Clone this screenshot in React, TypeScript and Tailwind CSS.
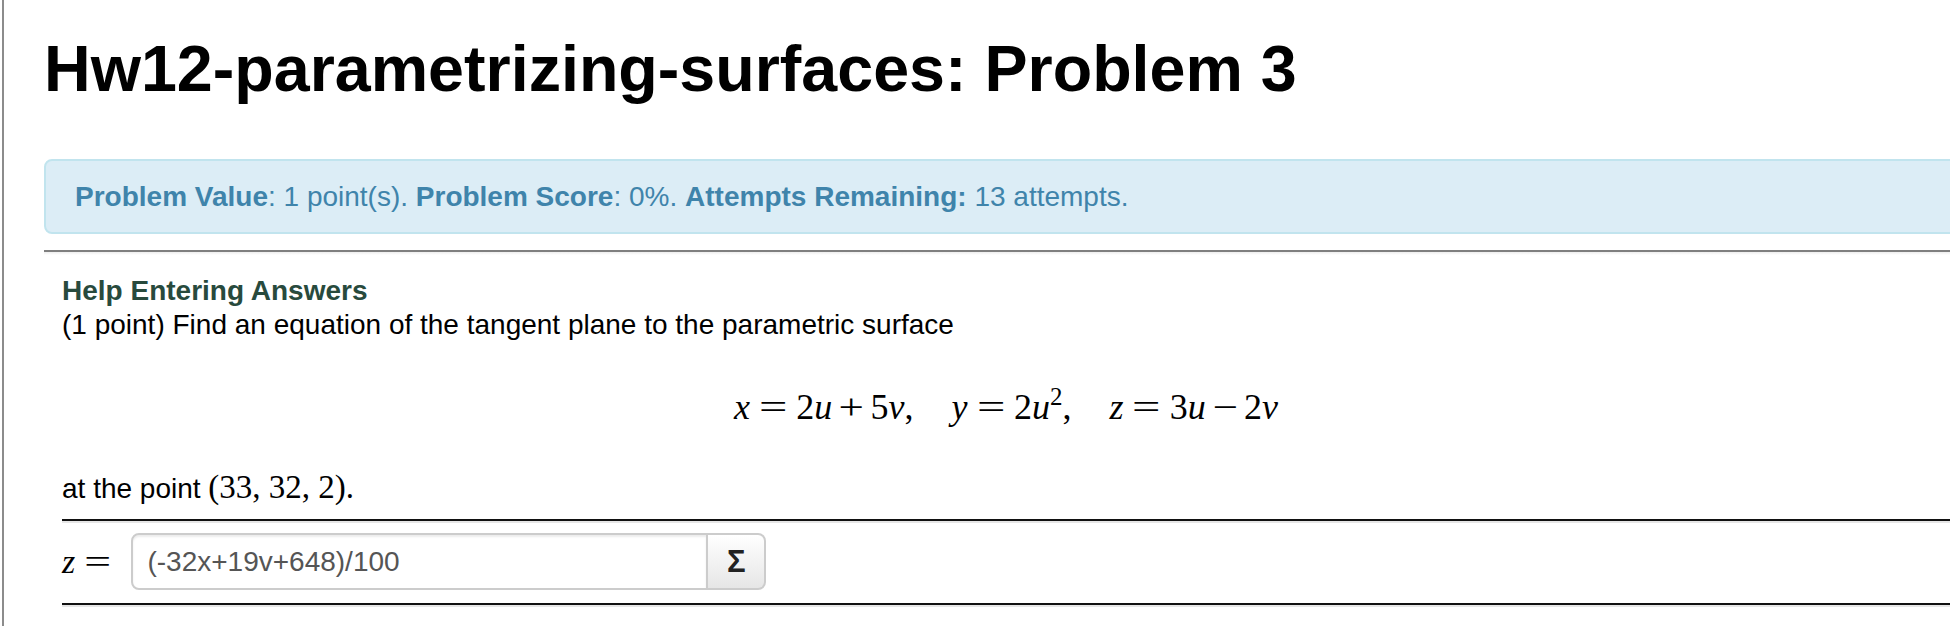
export default function App() {
  const serif = "font-['Liberation_Serif','Times_New_Roman',serif]";
  const eq = "mx-[13px] inline-block scale-x-[1.4]";
  return (
    <div className="w-[1950px] h-[626px] overflow-hidden bg-white font-['Liberation_Sans',Arial,sans-serif] text-black">
      <div className="ml-[2px] h-full border-l-2 border-[#8c8c8c] pl-[40px]">
        <h1 className="pt-[30px] text-[64.6px] font-bold leading-[78px]">
          Hw12-parametrizing-surfaces: Problem 3
        </h1>
        <div className="mt-[51px] -mr-6 rounded-l-[8px] border-2 border-[#c1e4ee] bg-[#dcedf6] pt-[16px] pb-[15px] pl-[29px] text-[28px] leading-[40px] text-[#3f84ab]">
          <b>Problem Value</b>: 1 point(s). <b>Problem Score</b>: 0%. <b>Attempts Remaining:</b> 13 attempts.
        </div>
        <div className="mt-[16px] border-t-2 border-[#7f7f7f]">
          <div className="h-[3px] bg-linear-to-b from-[#eeeeee] to-white" />
          <div className="pl-[18px] pt-[19px] text-[28px] leading-[34px]">
            <div className="font-bold text-[#284a3d]">Help Entering Answers</div>
            <div>(1 point) Find an equation of the tangent plane to the parametric surface</div>
            <div className={`mt-[45px] text-center text-[36px] leading-[40px] ${serif}`}>
              <i>x</i>
              <span className={eq}>=</span>2<i>u</i>
              <span className="mx-[9px] inline-block scale-x-[1.25]">+</span>5<i>v</i>,
              <span className="inline-block w-[38px]" />
              <i>y</i>
              <span className={eq}>=</span>2<i>u</i>
              <sup className="relative top-[-3px] text-[25px] align-top leading-none">2</sup>,
              <span className="inline-block w-[38px]" />
              <i>z</i>
              <span className={eq}>=</span>3<i>u</i>
              <span className="mx-[9px] inline-block scale-x-[1.25]">−</span>2<i>v</i>
            </div>
            <div className="mt-[42px] leading-[40px]">
              at the point <span className={`text-[33px] leading-none ${serif}`}>(33, 32, 2).</span>
            </div>
            <div className="mt-[10px] border-t-2 border-[#111111]">
              <div className="h-[2px] bg-[#e6e6e6]" />
            </div>
            <div className="mt-[10px] flex h-[57px] items-center">
              <span className={`text-[34px] italic leading-none ${serif}`}>z</span>
              <span className={`ml-[13px] inline-block scale-x-[1.4] text-[34px] leading-none ${serif}`}>=</span>
              <div className="ml-[24px] flex h-full w-[577px] items-center rounded-l-[8px] border-2 border-[#cccccc] pl-[14px] text-[#555555] shadow-[inset_0_2px_2px_rgba(0,0,0,0.075)]">
                (-32x+19v+648)/100
              </div>
              <div className="flex h-full w-[58px] items-center justify-center rounded-r-[8px] border-2 border-l-0 border-[#cccccc] bg-linear-to-b from-white to-[#e6e6e6] text-[31px] font-bold text-[#222222]">
                Σ
              </div>
            </div>
            <div className="mt-[13px] border-t-2 border-[#111111]">
              <div className="h-[2px] bg-[#e6e6e6]" />
            </div>
          </div>
        </div>
      </div>
    </div>
  );
}
